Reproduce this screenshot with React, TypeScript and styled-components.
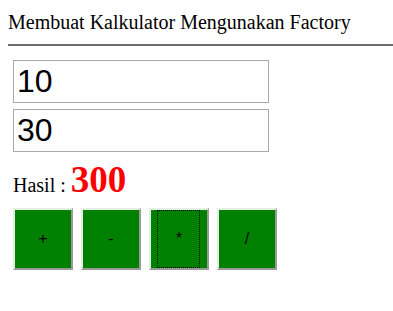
import React, { useState } from 'react'
import styled, { createGlobalStyle } from 'styled-components'

type Op = '+' | '-' | '*' | '/'

// simple factory returning the operation for a symbol
const operationFactory = (op: Op) => {
    switch (op) {
        case '+':
            return (a: number, b: number) => a + b
        case '-':
            return (a: number, b: number) => a - b
        case '*':
            return (a: number, b: number) => a * b
        case '/':
            return (a: number, b: number) => a / b
    }
}

const ops: Op[] = ['+', '-', '*', '/']

const App: React.FC = () => {
    const [first, setFirst] = useState<string>('10')
    const [second, setSecond] = useState<string>('30')
    const [active, setActive] = useState<Op>('*')
    const [result, setResult] = useState<number>(300)

    const handleClick = (op: Op) => {
        setActive(op)
        setResult(operationFactory(op)(Number(first), Number(second)))
    }

    return (
        <Page>
            <GlobalStyle />
            <Title>Membuat Kalkulator Mengunakan Factory</Title>
            <Line />
            <Content>
                <NumberInput value={first} onChange={e => setFirst(e.target.value)} />
                <NumberInput value={second} onChange={e => setSecond(e.target.value)} />
                <ResultRow>
                    Hasil : <ResultValue>{result}</ResultValue>
                </ResultRow>
                <ButtonRow>
                    {ops.map(op => (
                        <OpButton key={op} $focused={op === active} onClick={() => handleClick(op)}>
                            {op}
                        </OpButton>
                    ))}
                </ButtonRow>
            </Content>
        </Page>
    )
}

export default App

const GlobalStyle = createGlobalStyle`
    html, body {
        margin: 0;
        padding: 0;
        background: #fff;
    }
    body {
        font-family: "Liberation Serif", "Times New Roman", serif;
        overflow: hidden;
    }
`

const Page = styled.div`
    padding: 11px 0 0 8px;
    width: 393px;
    box-sizing: border-box;
`

const Title = styled.div`
    font-size: 20px;
    line-height: 23px;
    color: #000;
`

const Line = styled.div`
    margin-top: 10px;
    height: 2px;
    background: #6b6b6b;
`

const Content = styled.div`
    display: flex;
    flex-direction: column;
    align-items: flex-start;
    padding: 14px 0 0 5px;
`

const NumberInput = styled.input`
    width: 256px;
    height: 43px;
    box-sizing: border-box;
    border: 1px solid #a9a9a9;
    padding: 0 3px;
    margin-bottom: 6px;
    font-family: "Liberation Sans", Arial, sans-serif;
    font-size: 32px;
    color: #000;
    outline: none;
`

const ResultRow = styled.div`
    font-size: 20px;
    line-height: 40px;
    height: 48px;
    margin-top: 2px;
    color: #000;
`

const ResultValue = styled.span`
    font-size: 37px;
    font-weight: bold;
    color: #ff0000;
`

const ButtonRow = styled.div`
    display: flex;
    gap: 8px;
`

const OpButton = styled.button<{ $focused: boolean }>`
    position: relative;
    width: 60px;
    height: 62px;
    box-sizing: border-box;
    background: #008000;
    border: 2px solid;
    border-color: #e3efe3 #9a9a9a #9a9a9a #e3efe3;
    font-family: "Liberation Sans", Arial, sans-serif;
    font-size: 16px;
    color: #000;
    padding: 0;
    cursor: pointer;

    &::after {
        content: '';
        display: ${p => (p.$focused ? 'block' : 'none')};
        position: absolute;
        top: 0;
        bottom: 0;
        left: 6px;
        right: 7px;
        border: 1px dotted #000;
    }
`
